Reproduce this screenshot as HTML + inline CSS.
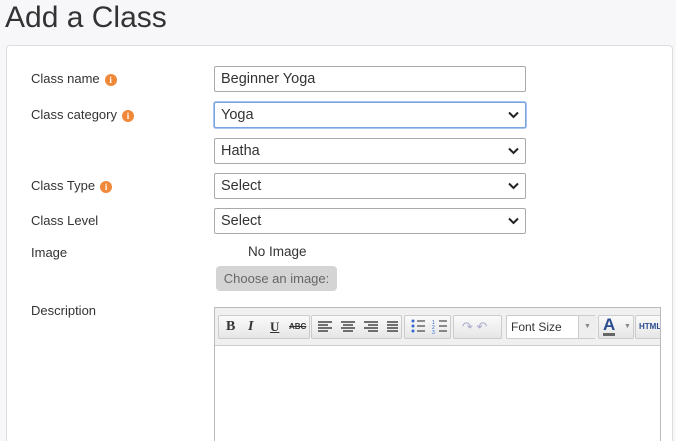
<!DOCTYPE html>
<html style="overflow:hidden;height:441px"><head><style>
body{margin:0;width:676px;height:441px;overflow:hidden;background:#f7f7f9;font-family:"Liberation Sans",Arial,sans-serif;color:#333;position:relative}
.a{position:absolute}
h1{position:absolute;left:5px;top:1px;margin:0;font-weight:normal;font-size:30px;color:#333}
.panel{left:6px;top:45px;width:665px;height:395px;background:#fff;border:1px solid #ddd;border-bottom:none;border-radius:4px 4px 0 0}
.lbl{left:31px;font-size:13px;color:#333}
.info{display:inline-block;width:12px;height:12px;border-radius:50%;background:#f0883a;color:#fff;font-size:9px;font-weight:bold;text-align:center;line-height:12px;vertical-align:0px;margin-left:5px;font-family:"Liberation Serif",serif}
.in{left:214px;height:24px;border:1px solid #aaa;border-radius:2px;background:#fff;font-size:14.5px;line-height:25px;padding-left:6px;box-sizing:content-box;width:304px}
.in svg{position:absolute;right:6px;top:8px}
.ed{left:214px;top:307px;width:445px;height:134px;border:1px solid #bbb;border-bottom:none;background:#fff;overflow:hidden}
.tb{left:0;top:0;width:445px;height:37px;background:#f0f0f0;border-bottom:1px solid #ccc}
.g{top:7px;height:22px;border:1px solid #ccc;border-radius:2px;background:linear-gradient(#fafafa,#e6e6e6);font-size:11px}
</style></head><body>
<h1>Add a Class</h1>
<div class="a panel"></div>
<div class="a lbl" style="top:71px">Class name<span class="info">i</span></div>
<div class="a lbl" style="top:107px">Class category<span class="info">i</span></div>
<div class="a lbl" style="top:178px">Class Type<span class="info">i</span></div>
<div class="a lbl" style="top:213px">Class Level</div>
<div class="a lbl" style="top:245px">Image</div>
<div class="a lbl" style="top:303px">Description</div>

<div class="a in" style="top:66px">Beginner Yoga</div>
<div class="a in" style="top:102px;border-color:#7aa3de;box-shadow:0 0 0 1px #a9c4ee">Yoga<svg width="11" height="8"><path d="M1 1.5L5.5 6 10 1.5" stroke="#222" stroke-width="2" fill="none"/></svg></div>
<div class="a in" style="top:138px">Hatha<svg width="11" height="8"><path d="M1 1.5L5.5 6 10 1.5" stroke="#222" stroke-width="2" fill="none"/></svg></div>
<div class="a in" style="top:173px">Select<svg width="11" height="8"><path d="M1 1.5L5.5 6 10 1.5" stroke="#222" stroke-width="2" fill="none"/></svg></div>
<div class="a in" style="top:208px">Select<svg width="11" height="8"><path d="M1 1.5L5.5 6 10 1.5" stroke="#222" stroke-width="2" fill="none"/></svg></div>

<div class="a" style="left:248px;top:244px;font-size:13.5px">No Image</div>
<div class="a" style="left:216px;top:266px;width:121px;height:25px;background:#d4d4d4;border-radius:4px;color:#666;font-size:13px;line-height:25px;text-align:center">Choose an image:</div>

<div class="a ed">
 <div class="a tb">
  <div class="a g" style="left:3px;width:90px"><b class="a" style="left:7px;top:3px;font-family:'Liberation Serif';font-size:14px">B</b><i class="a" style="left:29px;top:3px;font-family:'Liberation Serif';font-size:14px;font-weight:bold">I</i><u class="a" style="left:51px;top:3px;font-family:'Liberation Serif';font-size:13px;font-weight:bold">U</u><s class="a" style="left:70px;top:6px;font-size:8px;font-weight:bold">ABC</s></div>
  <div class="a g" style="left:96px;width:89px"><svg class="a" style="left:6px;top:5px" width="80" height="12"><g stroke="#222" stroke-width="1.2"><path d="M0 1h14M0 4h10M0 7h14M0 10h10M23 1h14M25 4h10M23 7h14M25 10h10M46 1h14M50 4h10M46 7h14M50 10h10M69 1h14M69 4h14M69 7h14M69 10h14"/></g></svg></div>
  <div class="a g" style="left:189px;width:45px"><svg class="a" style="left:6px;top:3px" width="36" height="16"><g fill="#36c"><circle cx="2" cy="2" r="1.5"/><circle cx="2" cy="7" r="1.5"/><circle cx="2" cy="12" r="1.5"/></g><path d="M6 2h8M6 7h8M6 12h8M28 2h8M28 7h8M28 12h8" stroke="#222"/><text x="21" y="15" font-size="5" fill="#36c">3</text><text x="21" y="5" font-size="5" fill="#36c">1</text><text x="21" y="10" font-size="5" fill="#36c">2</text></svg></div>
  <div class="a g" style="left:238px;width:47px;color:#aac;"><span class="a" style="left:8px;top:3px;font-size:13px">↷ ↶</span></div>
  <div class="a g" style="left:291px;width:88px;background:#fff"><span class="a" style="left:4px;top:4px;font-size:12px">Font Size</span><div class="a" style="left:71px;top:0;width:17px;height:22px;border-left:1px solid #ccc;background:#eee;font-size:7px;color:#888;text-align:center;line-height:22px">▼</div></div>
  <div class="a g" style="left:383px;width:34px"><span class="a" style="left:4px;top:1px;font-size:17px;font-weight:bold;color:#2a4d8f;border-bottom:3px solid #666;line-height:16px">A</span><span class="a" style="left:25px;top:7px;font-size:7px;color:#888">▼</span></div>
  <div class="a g" style="left:420px;width:30px"><span class="a" style="left:3px;top:6px;font-size:8px;font-weight:bold;color:#2a4d8f">HTML</span></div>
 </div>
</div>
</body></html>
